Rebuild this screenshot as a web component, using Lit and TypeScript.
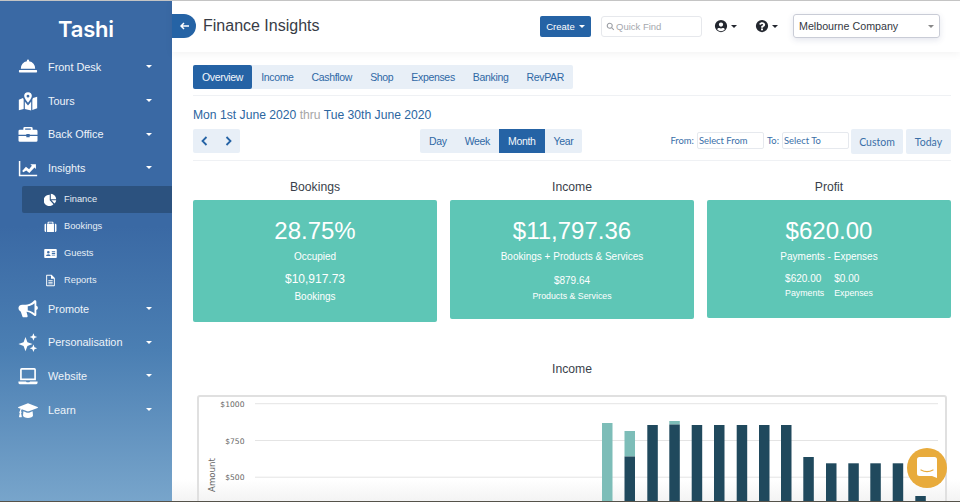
import { LitElement, html, css, svg } from "lit";
import { customElement } from "lit/decorators.js";

const ICONS: Record<string, any> = {
  bell: svg`<path d="M12 3a1.300 1.300 0 0 1 1.300 1.300v.9A8.600 8.600 0 0 1 20.600 14H3.400a8.600 8.600 0 0 1 7.300-8.800v-.9A1.300 1.300 0 0 1 12 3zM2 15.600h20a.9.9 0 0 1 .9.9v1.200a.9.9 0 0 1-.9.9H2a.9.9 0 0 1-.9-.9v-1.200a.9.9 0 0 1 .9-.9z"/>`,
  map: svg`<path fill-rule="evenodd" d="M12 1.500a4.600 4.600 0 0 0-4.600 4.600c0 2.200 3 6 4.600 7.900 1.600-1.900 4.600-5.700 4.600-7.900A4.600 4.600 0 0 0 12 1.500zm0 3a1.700 1.700 0 1 1 0 3.400 1.700 1.700 0 0 1 0-3.400z"/><path d="M1 10.500l5-2 .8 1.800v11.200L1 23.200zM8.200 12.500c1 1.500 2.400 3.300 3.800 4.800 1.400-1.500 2.800-3.300 3.800-4.800v10.800l-7.600-1.800zM17.200 10.300l.8-1.800 5-1.600v13.900l-5.800 2z"/>`,
  case: svg`<path fill-rule="evenodd" d="M8 3.500h8a1.600 1.600 0 0 1 1.600 1.600V7h4.200A1.600 1.600 0 0 1 23.400 8.600V13H14v-1h-4v1H.6V8.600A1.600 1.600 0 0 1 2.200 7h4.200V5.100A1.600 1.600 0 0 1 8 3.500zm.6 2V7h6.800V5.500z"/><path d="M.6 14.400H10V16h4v-1.600h9.400v5.400a1.600 1.600 0 0 1-1.600 1.600H2.200A1.600 1.600 0 0 1 .6 19.800z"/>`,
  chart: svg`<path d="M1 3.500h1.800v16.700H23V22H1z"/><path d="M5 15.500l4.500-5 3.800 3 3.300-4.300-1.800-1.700H21.500v5.700l-1.700-1.700-6.200 6.500-3.700-3L6.400 17z"/>`,
  pie: svg`<path d="M10.600 3.200v10.200l6.800 7.200A10.400 10.400 0 1 1 10.600 3.200z"/><path d="M12.600 1.500a10 10 0 0 1 9.900 9.900h-9.900z"/><path d="M13.600 13.400h9a10 10 0 0 1-3.100 6.200z"/>`,
  suit: svg`<path fill-rule="evenodd" d="M8 3h8a1.400 1.400 0 0 1 1.400 1.400V7H6.600V4.400A1.400 1.400 0 0 1 8 3zm.7 1.800V7h6.600V4.800z"/><rect x="5.600" y="7" width="12.800" height="15" rx=".5"/><path d="M3.900 7v15H3a2 2 0 0 1-2-2V9a2 2 0 0 1 2-2zM20.100 7H21a2 2 0 0 1 2 2v11a2 2 0 0 1-2 2h-.9z"/>`,
  id: svg`<path fill-rule="evenodd" d="M2 3.500h20A1.600 1.600 0 0 1 23.600 5v14a1.600 1.600 0 0 1-1.600 1.500H2A1.600 1.600 0 0 1 .4 19V5A1.600 1.600 0 0 1 2 3.500zM8 7.400a2.400 2.400 0 1 0 0 4.800 2.400 2.400 0 0 0 0-4.800zM3.800 16.800h8.400c0-2-1.800-3.600-4.200-3.600s-4.200 1.600-4.200 3.600zM14.400 8v1.500h6.200V8zm0 3.200v1.500h6.200v-1.500zm0 3.200v1.500h6.200v-1.500z"/>`,
  file: svg`<path fill-rule="evenodd" d="M5 1.500h9l6 6V21a1.500 1.500 0 0 1-1.500 1.500h-13A1.500 1.500 0 0 1 4 21V3a1.500 1.500 0 0 1 1-1.500zm.8 1.800v17.400h12.400V8.800h-5.300V3.300zM8 11.500h8V13H8zm0 3h8V16H8zm0 3h8V19H8z"/>`,
  horn: svg`<path d="M20.500 1.500a1.500 1.500 0 0 1 1.500 1.500v5.200a2.600 2.600 0 0 1 0 5V19a1.500 1.500 0 0 1-2.400 1.200l-2.400-1.900c-2.200-1.700-4.600-2.600-7-2.900l1.300 4.600c.3 1-.4 2-1.400 2H6.800c-.7 0-1.300-.4-1.500-1.100l-1.900-5.700a4.600 4.600 0 0 1-2.900-4.400A4.800 4.800 0 0 1 5.300 6.900h3.900c3 0 5.700-1.100 8-3l1.900-1.800c.3-.4.9-.6 1.400-.6zM19.800 5c-2.300 2-5.200 3.300-8.100 3.700v5.200c2.900.4 5.800 1.600 8.100 3.600z"/>`,
  spark: svg`<path d="M9 6l2.300 6.200 6.200 2.300-6.200 2.300L9 23l-2.300-6.200L.5 14.500l6.200-2.300zM18.500 1.500l1.300 3.200L23 6l-3.200 1.300-1.300 3.200-1.300-3.200L14 6l3.200-1.300zM18.500 15l1.300 3.200 3.200 1.300-3.200 1.300-1.300 3.200-1.300-3.200-3.200-1.300 3.200-1.300z"/>`,
  laptop: svg`<path fill-rule="evenodd" d="M4.400 2.500h15.200A1.900 1.900 0 0 1 21.500 4.400V17h-19V4.400a1.900 1.900 0 0 1 1.900-1.900zm.1 2v10.500h15V4.500z"/><path d="M.5 18.500h9l1 1.100h3l1-1.100h9v1.200a2.200 2.200 0 0 1-2.200 2.200H2.700A2.200 2.200 0 0 1 .5 19.700z"/>`,
  cap: svg`<path d="M12 4l11.500 4.400c.6.2.6 1 0 1.200L13 13.600c-.7.2-1.300.2-2 0L4.600 11.200c-.5.6-.9 1.400-1 2.300.5.3.7.7.7 1.200 0 .5-.2.9-.6 1.200l.9 4.200c0 .3-.2.5-.4.5H1.600c-.3 0-.5-.2-.4-.5l.9-4.200c-.4-.3-.6-.7-.6-1.200 0-.6.3-1 .7-1.300.1-1 .5-2 1-2.900L.5 9.600c-.6-.2-.6-1 0-1.200z"/><path d="M6.500 13.600l4.200 1.600c.9.3 1.700.3 2.600 0l4.200-1.600.5 5c0 1.700-2.900 3-6 3s-6-1.300-6-3z"/>`,
  user: svg`<path fill-rule="evenodd" d="M12 1.500a10.500 10.500 0 1 1 0 21 10.500 10.500 0 0 1 0-21zm0 4.400a3.700 3.700 0 1 0 0 7.400 3.700 3.700 0 0 0 0-7.400zm0 15a8.400 8.400 0 0 0 6.500-3.100c-.5-1.400-1.700-2.300-3-2.300-.3 0-.5 0-.8.1a8 8 0 0 1-5.400 0c-.3-.1-.5-.1-.8-.1-1.300 0-2.500.9-3 2.300a8.400 8.400 0 0 0 6.500 3.100z"/>`,
  help: svg`<path fill-rule="evenodd" d="M12 1.500a10.500 10.500 0 1 1 0 21 10.500 10.500 0 0 1 0-21zm.3 3.900c-2.300 0-3.800 1-5 2.700-.2.200-.1.600.1.700l1.600 1.200c.3.200.6.200.8-.1.700-.9 1.200-1.400 2.300-1.400.8 0 1.800.5 1.800 1.300 0 .6-.5.9-1.300 1.300-.9.600-2.100 1.200-2.100 2.900v.3c0 .3.2.5.5.5h2.600c.3 0 .5-.2.5-.5v-.1c0-1.100 3.300-1.200 3.300-4.300 0-2.400-2.400-4.500-4.900-4.500zM12 16a1.800 1.800 0 1 0 0 3.600 1.800 1.800 0 0 0 0-3.600z"/>`,
  search: svg`<path d="M10 2a8 8 0 0 1 6.500 12.600l5.400 5.400-1.900 1.900-5.400-5.400A8 8 0 1 1 10 2zm0 2.800a5.200 5.200 0 1 0 0 10.400 5.200 5.200 0 0 0 0-10.400z"/>`,
};

const icon = (n: string, cls = "") =>
  html`<svg class="ic ${cls}" viewBox="0 0 24 24" fill="currentColor" aria-hidden="true">${ICONS[n]}</svg>`;

type Nav = { icon: string; label: string; subs?: { icon: string; label: string; active?: boolean }[] };

const NAV: Nav[] = [
  { icon: "bell", label: "Front Desk" },
  { icon: "map", label: "Tours" },
  { icon: "case", label: "Back Office" },
  {
    icon: "chart",
    label: "Insights",
    subs: [
      { icon: "pie", label: "Finance", active: true },
      { icon: "suit", label: "Bookings" },
      { icon: "id", label: "Guests" },
      { icon: "file", label: "Reports" },
    ],
  },
  { icon: "horn", label: "Promote" },
  { icon: "spark", label: "Personalisation" },
  { icon: "laptop", label: "Website" },
  { icon: "cap", label: "Learn" },
];

const TABS = ["Overview", "Income", "Cashflow", "Shop", "Expenses", "Banking", "RevPAR"];
const RANGE = ["Day", "Week", "Month", "Year"];

const BARS: { x: number; w: number; top: number; split?: number }[] = [
  { x: 602, w: 10.5, top: 423, split: 999 },
  { x: 624.5, w: 10.5, top: 431, split: 456.5 },
  { x: 647.3, w: 10.5, top: 425 },
  { x: 669.3, w: 10.5, top: 421, split: 424.5 },
  { x: 691.7, w: 10.5, top: 425 },
  { x: 714, w: 10.5, top: 425 },
  { x: 736.7, w: 10.5, top: 425 },
  { x: 759, w: 10.5, top: 425 },
  { x: 781, w: 10.5, top: 425 },
  { x: 803.3, w: 10.5, top: 457 },
  { x: 826, w: 10.5, top: 463.3 },
  { x: 848.3, w: 10.5, top: 463.3 },
  { x: 870.3, w: 10.5, top: 463.3 },
  { x: 892.7, w: 10.5, top: 463.3 },
  { x: 915.3, w: 10.5, top: 496 },
];

@customElement("app-root")
export class AppRoot extends LitElement {
  static styles = css`
    :host {
      display: block;
      position: relative;
      width: 960px;
      height: 502px;
      overflow: hidden;
      background: #fff;
      font-family: "Liberation Sans", Arial, sans-serif;
      color: #3a3f4b;
    }
    .app { display: flex; height: 502px; }
    .ic { display: block; flex: none; }

    .side {
      width: 172px;
      flex: none;
      padding-top: 18px;
      box-sizing: border-box;
      background: linear-gradient(180deg, #3a69a4 0%, #3a69a4 45%, #4b7fb3 70%, #78a5cb 100%);
      color: #fff;
    }
    .logo {
      height: 22px;
      line-height: 22px;
      text-align: center;
      font-family: Inter, sans-serif;
      font-size: 22px;
      font-weight: 600;
      letter-spacing: -0.2px;
      padding-bottom: 10px;
    }
    .item {
      display: flex;
      align-items: center;
      height: 33.7px;
      color: #eef3f9;
      font-size: 10.9px;
    }
    .item .ic { width: 20px; height: 20px; margin: 0 10px 0 18px; color: #fff; }
    .item .name { flex: 1; }
    .caret {
      width: 0; height: 0; flex: none;
      border-left: 3px solid transparent;
      border-right: 3px solid transparent;
      border-top: 3px solid currentColor;
    }
    .item .caret { margin-right: 20px; color: #fff; }
    .sub {
      display: flex;
      align-items: center;
      height: 27px;
      margin-left: 22px;
      padding-left: 21.500px;
      color: #e6eef6;
      font-size: 9.3px;
    }
    .sub .ic { width: 13px; height: 13px; margin-right: 7.500px; color: #fff; }
    .sub.on { background: #2c527f; border-radius: 2px 0 0 2px; }
    .subs { margin: 1px 0 -2px; }

    .main { flex: 1; min-width: 0; display: flex; flex-direction: column; }
    .top {
      height: 52px;
      flex: none;
      display: flex;
      align-items: center;
      background: #fff;
      box-shadow: 0 2px 8px rgba(0, 0, 0, 0.05);
      position: relative;
      padding-right: 20px;
    }
    .back {
      width: 24px; height: 24px;
      flex: none;
      display: flex; align-items: center; justify-content: center;
      background: #2563a5;
      color: #fff;
      border-radius: 0 12px 12px 0;
    }
    .back svg { width: 9px; height: 8px; display: block; }
    .title { font-size: 16px; margin-left: 7px; flex: 1; color: #383c46; }
    .create {
      display: flex; align-items: center; gap: 4px;
      height: 21px; width: 51px; box-sizing: border-box;
      justify-content: center;
      background: #2563a5; color: #fff;
      font-size: 9.5px;
      border-radius: 2px;
    }
    .search {
      display: flex; align-items: center; gap: 1px;
      width: 101px; height: 21px; box-sizing: border-box;
      margin-left: 10px; padding-left: 4px;
      border: 1px solid #e6e8ec; border-radius: 3px;
      font-size: 9.5px; color: #a5a8ae;
    }
    .search .ic { width: 9px; height: 9px; color: #9b9ea4; }
    .uicon { display: flex; align-items: center; gap: 3px; color: #23272f; }
    .uicon .ic { width: 14px; height: 14px; }
    .u1 { margin-left: 12px; }
    .u2 { margin-left: 18px; }
    .select {
      display: flex; align-items: center; justify-content: space-between;
      width: 147px; height: 24px; box-sizing: border-box;
      margin-left: 15px; padding: 0 5px 0 5px;
      border: 1px solid #c9ccd6; border-radius: 3px;
      box-shadow: 0 2px 6px rgba(60, 70, 130, 0.14);
      font-size: 10.7px; color: #343842;
    }
    .select .caret { color: #888; }

    .content { flex: 1; padding: 13px 9px 0 21px; min-height: 0; }
    .tabs {
      display: inline-flex;
      height: 24px;
      background: #e8eff7;
      border-radius: 2px;
      vertical-align: top;
    }
    .tb {
      display: flex; align-items: center;
      padding: 0 9px;
      font-size: 10.5px;
      letter-spacing: -0.33px;
      color: #2f68a5;
    }
    .tb.on { background: #2563a5; color: #f4f8fc; border-radius: 2px; }
    .tab-row { height: 30px; border-bottom: 1px solid #eff1f4; box-sizing: content-box; }
    .date { font-size: 12.15px; line-height: 14px; color: #2c669f; margin-top: 12px; }
    .date span { color: #a6a6a6; }
    .controls {
      display: flex; align-items: flex-start;
      margin-top: 7px;
      height: 31px;
      border-bottom: 1px solid #eff1f4;
    }
    .arrows {
      display: flex; flex: none; width: 47px; height: 24px;
      background: #e8eff7; border-radius: 2px; color: #2563a5;
    }
    .arrows div { flex: 1; display: flex; align-items: center; justify-content: center; }
    .arrows svg { width: 7px; height: 10px; display: block; }
    .range {
      display: flex; flex: none; height: 24px; margin-left: 180px;
      background: #e8eff7; border-radius: 2px;
    }
    .range .tb.on { border-radius: 0; }
    .from {
      display: flex; align-items: center; height: 23px;
      margin-left: auto;
      font-family: Lato, sans-serif;
      font-size: 9.4px; color: #3a6fa8;
    }
    .from .inp {
      width: 67px; height: 17px; box-sizing: border-box;
      border: 1px solid #e6e9ee; border-radius: 2px;
      padding-left: 1px; line-height: 15px;
      margin-left: 3px;
    }
    .to { margin-left: 3px; }
    .btn {
      height: 25px; flex: none; display: flex; align-items: center; justify-content: center;
      background: #e8eff7; border-radius: 2px;
      font-family: Lato, sans-serif; font-size: 10.5px; color: #3a6fa8;
    }
    .b1 { width: 52px; margin-left: 2px; }
    .b2 { width: 45px; margin-left: 3px; }

    .cards {
      display: grid;
      grid-template-columns: 244px 243.5px 244px;
      column-gap: 13.25px;
      align-items: start;
      margin-top: 19px;
    }
    .h { text-align: center; font-size: 12.2px; line-height: 14px; color: #3a3f4b; margin-bottom: 6px; }
    .card {
      background: #5ec6b6;
      border-radius: 2px;
      text-align: center;
      color: #fff;
      padding-top: 16px;
      box-sizing: border-box;
    }
    .big { font-size: 24px; line-height: 30px; }
    .lab { font-size: 10px; line-height: 13px; margin-top: 4px; }
    .val { font-size: 12px; line-height: 14px; margin-top: 9px; }
    .val2 { font-size: 10px; line-height: 12px; margin-top: 12px; }
    .lab2 { font-size: 10px; line-height: 13px; margin-top: 4px; }
    .lab3 { font-size: 8.8px; line-height: 11px; margin-top: 4px; }
    .c1 { height: 122px; }
    .c2 { height: 119px; }
    .c3 { height: 118px; }
    .pair { display: flex; justify-content: center; gap: 10px; text-align: left; }
    .pair .val2 { margin-top: 10px; }
    .pair .lab3 { margin-top: 3px; }

    .ct { text-align: center; font-size: 12.2px; line-height: 14px; margin-top: 40px; color: #3a3f4b; }

    .chart { position: absolute; left: 0; top: 0; pointer-events: none; }
    .chart text { font-family: "DejaVu Sans", sans-serif; font-size: 7.6px; fill: #666; }
    .chart .yl { text-anchor: end; }
    .chart .axis { font-size: 8.6px; }

    .fade {
      position: absolute; left: 172px; right: 0; bottom: 1px; height: 22px;
      background: linear-gradient(180deg, rgba(236, 236, 236, 0), rgba(236, 236, 236, 0.6));
    }
    .topline { position: absolute; left: 0; right: 0; top: 0; height: 1px; background: #c4c4c4; }
    .botline { position: absolute; left: 0; right: 0; bottom: 0; height: 1px; background: #55524a; }
    .chat {
      position: absolute; left: 907px; top: 447.500px;
      width: 40px; height: 40px; border-radius: 50%;
      background: #e8ab3c;
      display: flex; align-items: center; justify-content: center;
    }
    .chat svg { width: 20px; height: 21px; display: block; }
  `;

  render() {
    return html`
      <div class="app">
        <aside class="side">
          <div class="logo">Tashi</div>
          ${NAV.map(
            (n) => html`
              <div class="item">${icon(n.icon)}<span class="name">${n.label}</span><span class="caret"></span></div>
              ${n.subs
                ? html`<div class="subs">
                    ${n.subs.map(
                      (s) => html`<div class="sub ${s.active ? "on" : ""}">${icon(s.icon)}<span>${s.label}</span></div>`
                    )}
                  </div>`
                : ""}
            `
          )}
        </aside>
        <main class="main">
          <header class="top">
            <div class="back">
              <svg viewBox="0 0 9 8" fill="none" stroke="currentColor" stroke-width="1.5"><path d="M9 4H1.200M4 1L1 4l3 3"/></svg>
            </div>
            <div class="title">Finance Insights</div>
            <div class="create">Create <span class="caret"></span></div>
            <div class="search">${icon("search")}<span>Quick Find</span></div>
            <div class="uicon u1">${icon("user")}<span class="caret"></span></div>
            <div class="uicon u2">${icon("help")}<span class="caret"></span></div>
            <div class="select"><span>Melbourne Company</span><span class="caret"></span></div>
          </header>
          <section class="content">
            <div class="tab-row">
              <div class="tabs">
                ${TABS.map((t, i) => html`<div class="tb ${i === 0 ? "on" : ""}">${t}</div>`)}
              </div>
            </div>
            <div class="date">Mon 1st June 2020 <span>thru</span> Tue 30th June 2020</div>
            <div class="controls">
              <div class="arrows">
                <div><svg viewBox="0 0 7 10" fill="none" stroke="currentColor" stroke-width="1.8"><path d="M5.500 1L1.500 5l4 4"/></svg></div>
                <div><svg viewBox="0 0 7 10" fill="none" stroke="currentColor" stroke-width="1.8"><path d="M1.500 1l4 4-4 4"/></svg></div>
              </div>
              <div class="range">
                ${RANGE.map((t) => html`<div class="tb ${t === "Month" ? "on" : ""}">${t}</div>`)}
              </div>
              <div class="from">
                <span>From:</span><div class="inp">Select From</div>
                <span class="to">To:</span><div class="inp">Select To</div>
              </div>
              <div class="btn b1">Custom</div>
              <div class="btn b2">Today</div>
            </div>
            <div class="cards">
              <div>
                <div class="h">Bookings</div>
                <div class="card c1">
                  <div class="big">28.75%</div>
                  <div class="lab">Occupied</div>
                  <div class="val">$10,917.73</div>
                  <div class="lab2">Bookings</div>
                </div>
              </div>
              <div>
                <div class="h">Income</div>
                <div class="card c2">
                  <div class="big">$11,797.36</div>
                  <div class="lab">Bookings + Products &amp; Services</div>
                  <div class="val2">$879.64</div>
                  <div class="lab3">Products &amp; Services</div>
                </div>
              </div>
              <div>
                <div class="h">Profit</div>
                <div class="card c3">
                  <div class="big">$620.00</div>
                  <div class="lab">Payments - Expenses</div>
                  <div class="pair">
                    <div><div class="val2">$620.00</div><div class="lab3">Payments</div></div>
                    <div><div class="val2">$0.00</div><div class="lab3">Expenses</div></div>
                  </div>
                </div>
              </div>
            </div>
            <div class="ct">Income</div>
          </section>
        </main>
      </div>

      <div class="fade"></div>
      <svg class="chart" width="960" height="502" viewBox="0 0 960 502">
        <path d="M198 502V398a2 2 0 0 1 2-2H944a2 2 0 0 1 2 2V502" fill="none" stroke="#e0e0e0" stroke-width="2"/>
        <path d="M255 403.700H938M255 440.500H938M255 477.200H938" stroke="#e4e4e4" stroke-width="1" fill="none"/>
        <text class="yl" x="244.500" y="407">$1000</text>
        <text class="yl" x="244.500" y="443.500">$750</text>
        <text class="yl" x="244.500" y="480">$500</text>
        <text class="axis" transform="translate(215 492) rotate(-90)">Amount</text>
        ${BARS.map((b) => {
          const split = b.split ?? b.top;
          const tealEnd = Math.min(split, 502);
          return svg`
            ${b.split
              ? svg`<rect x=${b.x} y=${b.top} width=${b.w} height=${tealEnd - b.top} fill="#7dbdb8"/>`
              : ""}
            ${split < 502
              ? svg`<rect x=${b.x} y=${split} width=${b.w} height=${502 - split} fill="#20495d"/>`
              : ""}
          `;
        })}
      </svg>

      <div class="topline"></div>
      <div class="botline"></div>
      <div class="chat">
        <svg viewBox="0 0 20 21" aria-hidden="true">
          <path d="M2.500 0h15A2.500 2.500 0 0 1 20 2.500V21l-5-2H2.500A2.500 2.500 0 0 1 0 16.500V2.500A2.500 2.500 0 0 1 2.500 0z" fill="#fff"/>
          <path d="M4 13c3.500 2 8.500 2 12 0" fill="none" stroke="#e8ab3c" stroke-width="1.200" stroke-linecap="round"/>
        </svg>
      </div>
    `;
  }
}
